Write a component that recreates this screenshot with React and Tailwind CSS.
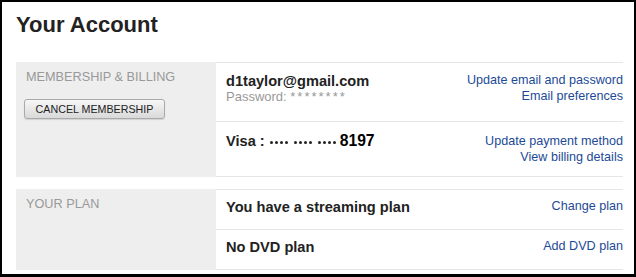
const font = { fontFamily: '"Liberation Sans", Arial, sans-serif' };

function Link({ children }) {
  return <div className="text-[12.6px] leading-[16px] text-[#1d4a96] text-right whitespace-nowrap">{children}</div>;
}

function Dots() {
  return (
    <span className="flex gap-[2px]">
      <span className="w-[3px] h-[3px] rounded-full bg-[#222222]" />
      <span className="w-[3px] h-[3px] rounded-full bg-[#222222]" />
      <span className="w-[3px] h-[3px] rounded-full bg-[#222222]" />
      <span className="w-[3px] h-[3px] rounded-full bg-[#222222]" />
    </span>
  );
}

function Section({ label, children, extra, className }) {
  return (
    <div className={`flex ${className || ''}`}>
      <div className="w-[200px] shrink-0 bg-[#eeeeee] pt-[8px]">
        <div className="pl-[10px] text-[12.7px] leading-[15px] text-[#999999]">{label}</div>
        {extra}
      </div>
      <div className="flex-1 border-t border-[#e6e6e6]">{children}</div>
    </div>
  );
}

export default function App() {
  return (
    <div
      style={font}
      className="w-[636px] h-[277px] overflow-hidden bg-white border-black border-t-2 border-x-2 border-b-[3px] pl-[14px] pr-[11px]"
    >
      <h1 className="pt-[10px] text-[22px] leading-[26px] font-bold text-[#222222] mb-[24px]">Your Account</h1>

      <Section
        label="MEMBERSHIP & BILLING"
        extra={
          <button className="ml-[8px] mt-[14px] w-[141px] h-[20px] rounded-[3px] border border-[#a9a9a9] bg-gradient-to-b from-[#f7f7f7] to-[#d9d9d9] shadow-[0_1px_1px_rgba(0,0,0,0.12)] text-[10.7px] leading-[18px] text-[#222222]">
            CANCEL MEMBERSHIP
          </button>
        }
      >
        <div className="h-[59px] border-b border-[#e6e6e6] pl-[10px] pt-[9px] flex justify-between">
          <div>
            <div className="text-[14.6px] leading-[18px] font-bold text-[#222222]">d1taylor@gmail.com</div>
            <div className="text-[13px] leading-[14px] text-[#999999]">
              Password: <span className="tracking-[2px]">********</span>
            </div>
          </div>
          <div>
            <Link>Update email and password</Link>
            <Link>Email preferences</Link>
          </div>
        </div>
        <div className="h-[55px] border-b border-[#e6e6e6] pl-[10px] pt-[10px] flex justify-between">
          <div className="flex items-baseline text-[14.6px] leading-[18px] font-bold text-[#222222]">
            <span>Visa :</span>
            <span className="self-start mt-[8.5px] ml-[5px] flex gap-[6px]">
              <Dots />
              <Dots />
              <Dots />
            </span>
            <span className="text-[15.7px] text-black ml-[4px]">8197</span>
          </div>
          <div className="pt-px">
            <Link>Update payment method</Link>
            <Link>View billing details</Link>
          </div>
        </div>
      </Section>

      <Section label="YOUR PLAN" className="mt-[12px]">
        <div className="h-[40px] border-b border-[#e6e6e6] pl-[10px] pt-[8px] flex justify-between">
          <div className="text-[14.6px] leading-[18px] font-bold text-[#222222]">You have a streaming plan</div>
          <Link>Change plan</Link>
        </div>
        <div className="h-[40px] border-b border-[#e6e6e6] pl-[10px] pt-[8px] flex justify-between">
          <div className="text-[14.6px] leading-[18px] font-bold text-[#222222]">No DVD plan</div>
          <Link>Add DVD plan</Link>
        </div>
      </Section>
    </div>
  );
}
